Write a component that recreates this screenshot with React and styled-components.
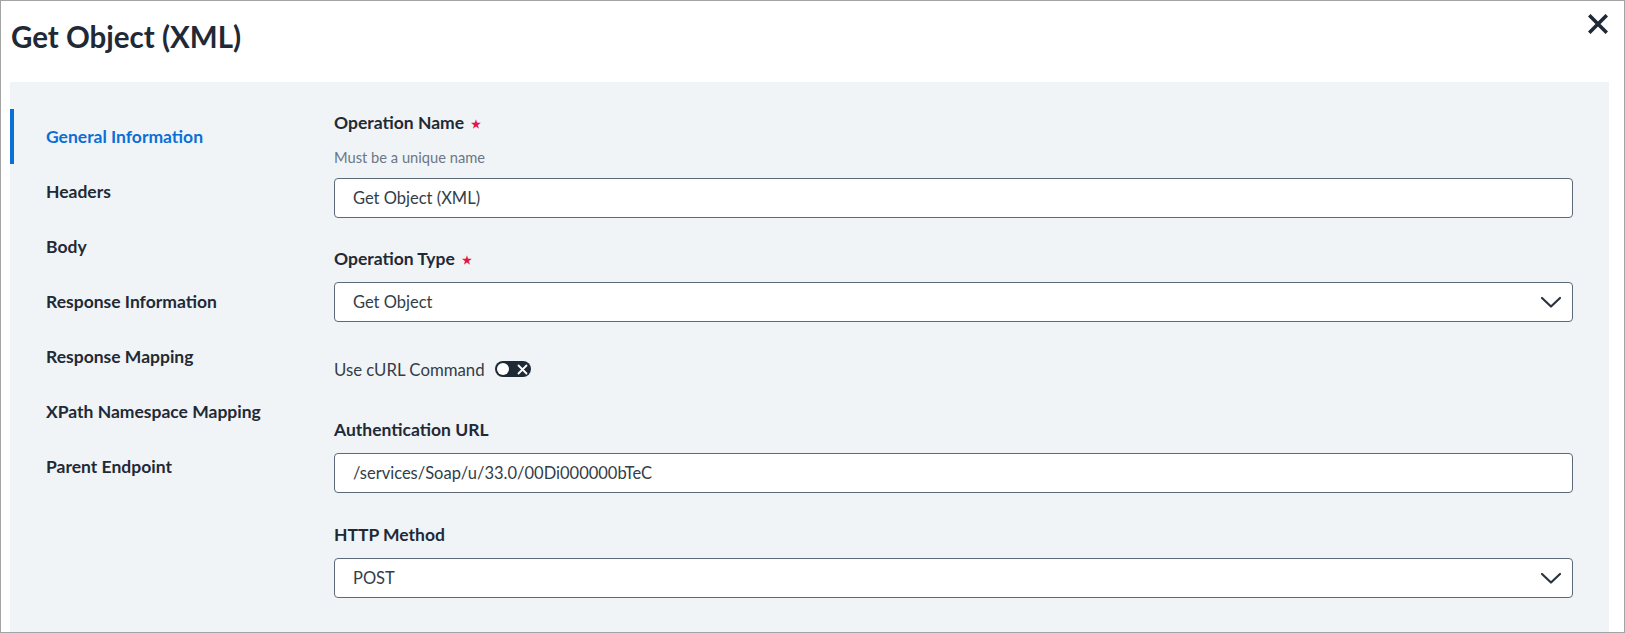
import React from "react";
import styled, { createGlobalStyle } from "styled-components";

const Global = createGlobalStyle`
  html, body { margin: 0; padding: 0; background: #ffffff; }
  * { box-sizing: border-box; }
  body { font-family: Lato, "Noto Sans", sans-serif; color: #1f2a36; }
`;

const Frame = styled.div`
  width: 1625px;
  height: 633px;
  border: 1px solid #a4a4a4;
  background: #ffffff;
  padding: 0 15px 0 9px;
  display: flex;
  flex-direction: column;
  overflow: hidden;
`;

const Header = styled.header`
  height: 81px;
  display: flex;
  justify-content: space-between;
  align-items: flex-start;
`;

const Title = styled.h1`
  margin: 18px 0 0 1px;
  font-size: 29.5px;
  line-height: 36px;
  font-weight: 700;
  color: #1f2a36;
`;

const CloseButton = styled.button`
  margin-top: 12px;
  width: 22px;
  height: 22px;
  padding: 0;
  border: none;
  background: transparent;
  display: flex;
  align-items: center;
  justify-content: center;
  color: #1f2a36;
`;

const Panel = styled.div`
  flex: 1;
  background: #f1f4f7;
  display: grid;
  grid-template-columns: 324px 1fr;
  padding: 27px 36px 0 0;
`;

const Nav = styled.nav`
  display: flex;
  flex-direction: column;
`;

const NavItem = styled.div`
  height: 55px;
  display: flex;
  align-items: center;
  padding-left: 32px;
  border-left: 4px solid ${(p) => (p.$active ? "#0a6fd6" : "transparent")};
  color: ${(p) => (p.$active ? "#0a6fd6" : "#1f2a36")};
  font-size: 17.5px;
  font-weight: 700;
`;

const Form = styled.div`
  padding-top: 3px;
  display: flex;
  flex-direction: column;
`;

const Field = styled.div`
  display: flex;
  flex-direction: column;
  margin-bottom: ${(p) => p.$gap ?? 30}px;
`;

const Label = styled.div`
  font-size: 17.5px;
  line-height: 22px;
  font-weight: 700;
  color: #1f2a36;
  margin-bottom: ${(p) => (p.$hasHelp ? 0 : 12)}px;
  display: flex;
  align-items: center;
`;

const Required = styled.span`
  color: #e0154a;
  font-size: 11px;
  margin-left: 7px;
  line-height: 1;
`;

const Help = styled.div`
  font-size: 14.7px;
  line-height: 20px;
  color: #6b7785;
  margin: 13px 0 11px;
`;

const TextInput = styled.input`
  height: 40px;
  width: 100%;
  border: 1px solid #5d6977;
  border-radius: 4px;
  background: #ffffff;
  padding: 0 18px;
  font-family: Lato, "Noto Sans", sans-serif;
  font-size: 16.5px;
  color: #333d48;
  outline: none;
`;

const Select = styled.div`
  height: 40px;
  border: 1px solid #5d6977;
  border-radius: 4px;
  background: #ffffff;
  padding: 0 10px 0 18px;
  display: flex;
  align-items: center;
  justify-content: space-between;
  font-size: 16.5px;
  color: #333d48;
`;

const ToggleRow = styled.div`
  display: flex;
  align-items: center;
  height: 22px;
  margin: 6px 0 39px;
  font-size: 16.8px;
  color: #333d48;
  gap: 10px;
`;

const Toggle = styled.span`
  width: 36px;
  height: 16px;
  border-radius: 8px;
  background: #1f2a36;
  display: flex;
  align-items: center;
  justify-content: space-between;
  padding: 0 3px 0 2px;
`;

const Knob = styled.span`
  width: 12px;
  height: 12px;
  border-radius: 50%;
  background: #ffffff;
`;

const Chevron = () => (
  <svg width="22" height="22" viewBox="0 0 22 22" fill="none">
    <path d="M2 7 L11 15.5 L20 7" stroke="#2a3440" strokeWidth="2.2" strokeLinecap="round" strokeLinejoin="round" />
  </svg>
);

const navItems = [
  "General Information",
  "Headers",
  "Body",
  "Response Information",
  "Response Mapping",
  "XPath Namespace Mapping",
  "Parent Endpoint",
];

export default function App() {
  return (
    <>
      <Global />
      <Frame>
        <Header>
          <Title>Get Object (XML)</Title>
          <CloseButton aria-label="Close">
            <svg width="20" height="20" viewBox="0 0 20 20">
              <path d="M2.5 2.5 L17.5 17.5 M17.5 2.5 L2.5 17.5" stroke="#1f2a36" strokeWidth="3.6" strokeLinecap="square" />
            </svg>
          </CloseButton>
        </Header>
        <Panel>
          <Nav>
            {navItems.map((n, i) => (
              <NavItem key={n} $active={i === 0}>
                {n}
              </NavItem>
            ))}
          </Nav>
          <Form>
            <Field>
              <Label $hasHelp>
                Operation Name<Required>★</Required>
              </Label>
              <Help>Must be a unique name</Help>
              <TextInput readOnly value="Get Object (XML)" />
            </Field>
            <Field>
              <Label>
                Operation Type<Required>★</Required>
              </Label>
              <Select>
                <span>Get Object</span>
                <Chevron />
              </Select>
            </Field>
            <ToggleRow>
              Use cURL Command
              <Toggle>
                <Knob />
                <svg width="11" height="11" viewBox="0 0 11 11">
                  <path d="M1.5 1.5 L9.5 9.5 M9.5 1.5 L1.5 9.5" stroke="#ffffff" strokeWidth="1.8" strokeLinecap="round" />
                </svg>
              </Toggle>
            </ToggleRow>
            <Field $gap={31}>
              <Label>Authentication URL</Label>
              <TextInput readOnly value="/services/Soap/u/33.0/00Di000000bTeC" />
            </Field>
            <Field>
              <Label>HTTP Method</Label>
              <Select>
                <span>POST</span>
                <Chevron />
              </Select>
            </Field>
          </Form>
        </Panel>
      </Frame>
    </>
  );
}
